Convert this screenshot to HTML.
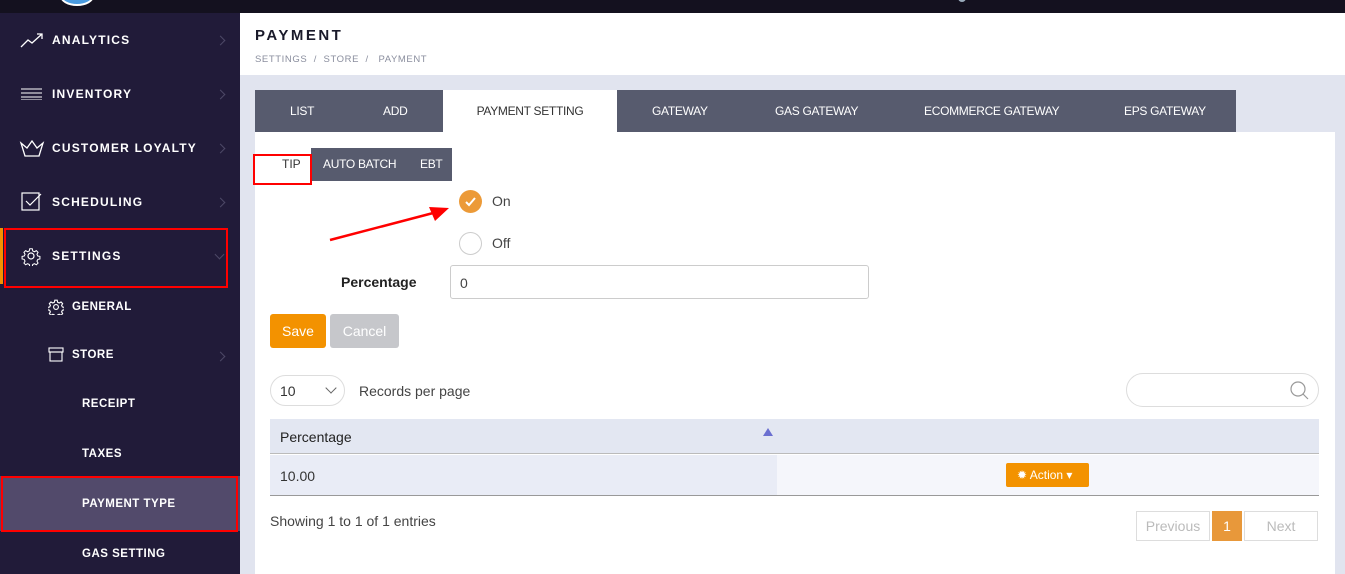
<!DOCTYPE html>
<html><head><meta charset="utf-8">
<style>
*{box-sizing:border-box;margin:0;padding:0}
body{width:1345px;height:574px;overflow:hidden;background:#e1e4ef;font-family:"Liberation Sans",sans-serif;position:relative}
.abs{position:absolute}
#top{left:0;top:0;width:1345px;height:13px;background:#14111f}
#side{left:0;top:13px;width:240px;height:561px;background:#211b39}
.mi{position:absolute;left:52px;color:#fff;font-size:12px;font-weight:bold;letter-spacing:1.2px}
.chev{position:absolute;left:217px;width:7px;height:7px;border-right:1px solid #4d4866;border-top:1px solid #4d4866;transform:rotate(45deg)}
.si{position:absolute;color:#fff;font-size:11.5px;font-weight:bold;letter-spacing:.5px}
.tab{position:absolute;top:90px;height:42px;line-height:42px;color:#fff;font-size:12px;letter-spacing:-.3px;text-align:center;background:#575b6e}
.t2{position:absolute;top:148px;height:33px;line-height:33px;color:#fff;font-size:12px;letter-spacing:-.3px;background:#575b6e}
</style></head><body>
<div id="top" class="abs"></div>
<div class="abs" style="left:60px;top:-14px;width:34px;height:20px;border-radius:50%;background:#4a9be0;border:2px solid #fff"></div>
<div class="abs" style="left:958px;top:-6px;width:8px;height:8px;border-radius:50%;background:#9ab"></div>
<div id="side" class="abs"></div>
<svg class="abs" style="left:20px;top:32px" width="24" height="16" viewBox="0 0 24 16"><path d="M1 15 L8 8 L12 11 L22 2 M17 2 H22 V7" fill="none" stroke="#fff" stroke-width="1.3"/></svg>
<div class="mi" style="top:33px">ANALYTICS</div><div class="chev" style="top:37px"></div>
<svg class="abs" style="left:20px;top:88px" width="24" height="12"><path d="M1 1H22M1 5H22M1 9H22M1 12H22" stroke="#fff" stroke-width="1"/></svg>
<div class="mi" style="top:87px">INVENTORY</div><div class="chev" style="top:91px"></div>
<svg class="abs" style="left:19px;top:139px" width="26" height="19"><path d="M2 4 L6 17 H20 L24 4 L18 9 L13 2 L8 9 Z" fill="none" stroke="#fff" stroke-width="1.3"/></svg>
<div class="mi" style="top:141px">CUSTOMER LOYALTY</div><div class="chev" style="top:145px"></div>
<svg class="abs" style="left:21px;top:192px" width="22" height="20"><rect x="1" y="1" width="17" height="17" fill="none" stroke="#fff" stroke-width="1.2"/><path d="M5 9 L9 13 L20 2" fill="none" stroke="#fff" stroke-width="1.2"/></svg>
<div class="mi" style="top:195px">SCHEDULING</div><div class="chev" style="top:199px"></div>
<div class="abs" style="left:0;top:228px;width:3px;height:56px;background:#f39200"></div>
<div class="abs" style="left:4px;top:228px;width:224px;height:60px;border:2px solid #f00"></div>
<svg class="abs" style="left:21px;top:246px" width="20" height="20" viewBox="0 0 20 20"><circle cx="10" cy="10" r="3" fill="none" stroke="#fff" stroke-width="1.2"/><path d="M8.5 1.5h3l.5 2.5 2 1 2.3-1.3 2 2-1.3 2.3 1 2 2.5.5v3l-2.5.5-1 2 1.3 2.3-2 2-2.3-1.3-2 1-.5 2.5h-3l-.5-2.5-2-1-2.3 1.3-2-2 1.3-2.3-1-2-2.5-.5v-3l2.5-.5 1-2-1.3-2.3 2-2 2.3 1.3 2-1z" transform="translate(10 10) scale(.85) translate(-10 -10)" fill="none" stroke="#fff" stroke-width="1.2"/></svg>
<div class="mi" style="top:249px">SETTINGS</div>
<div class="abs" style="left:216px;top:251px;width:7px;height:7px;border-right:1px solid #4d4866;border-bottom:1px solid #4d4866;transform:rotate(45deg)"></div>
<svg class="abs" style="left:48px;top:299px" width="16" height="16" viewBox="0 0 20 20"><circle cx="10" cy="10" r="3" fill="none" stroke="#fff" stroke-width="1.4"/><path d="M8.5 1.5h3l.5 2.5 2 1 2.3-1.3 2 2-1.3 2.3 1 2 2.5.5v3l-2.5.5-1 2 1.3 2.3-2 2-2.3-1.3-2 1-.5 2.5h-3l-.5-2.5-2-1-2.3 1.3-2-2 1.3-2.3-1-2-2.5-.5v-3l2.5-.5 1-2-1.3-2.3 2-2 2.3 1.3 2-1z" fill="none" stroke="#fff" stroke-width="1.4"/></svg>
<div class="si" style="left:72px;top:301px">GENERAL</div>
<svg class="abs" style="left:48px;top:347px" width="16" height="15"><rect x="1" y="1" width="14" height="4" fill="none" stroke="#fff" stroke-width="1.1"/><rect x="2" y="5" width="12" height="9" fill="none" stroke="#fff" stroke-width="1.1"/></svg>
<div class="si" style="left:72px;top:349px">STORE</div><div class="chev" style="top:353px"></div>
<div class="si" style="left:82px;top:398px">RECEIPT</div>
<div class="si" style="left:82px;top:448px">TAXES</div>
<div class="abs" style="left:0;top:476px;width:240px;height:55px;background:#524a6b"></div>
<div class="abs" style="left:1px;top:476px;width:237px;height:56px;border:2px solid #f00"></div>
<div class="si" style="left:82px;top:498px">PAYMENT TYPE</div>
<div class="si" style="left:82px;top:548px">GAS SETTING</div>
<div class="abs" style="left:240px;top:13px;width:1105px;height:62px;background:#fff"></div>
<div class="abs" style="left:255px;top:27px;font-size:15px;font-weight:bold;letter-spacing:2.5px;color:#1a1a2a">PAYMENT</div>
<div class="abs" style="left:255px;top:54px;font-size:9.5px;letter-spacing:.6px;color:#8a8e9e">SETTINGS &nbsp;/ &nbsp;STORE &nbsp;/ &nbsp;&nbsp;PAYMENT</div>
<div class="abs" style="left:255px;top:132px;width:1080px;height:442px;background:#fff"></div>
<div class="tab" style="left:255px;width:188px"><span style="position:absolute;left:35px">LIST</span><span style="position:absolute;left:128px">ADD</span></div>
<div class="abs" style="left:443px;top:90px;width:174px;height:42px;line-height:42px;background:#fff;text-align:center;font-size:12px;letter-spacing:-.3px;color:#333">PAYMENT SETTING</div>
<div class="tab" style="left:617px;width:619px"><span style="position:absolute;left:35px">GATEWAY</span><span style="position:absolute;left:158px">GAS GATEWAY</span><span style="position:absolute;left:307px">ECOMMERCE GATEWAY</span><span style="position:absolute;left:507px">EPS GATEWAY</span></div>
<div class="t2" style="left:311px;width:141px"><span style="position:absolute;left:12px">AUTO BATCH</span><span style="position:absolute;left:109px">EBT</span></div>
<div class="abs" style="left:253px;top:154px;width:59px;height:31px;border:2px solid #f00"></div>
<div class="abs" style="left:282px;top:157px;font-size:12px;color:#333">TIP</div>
<div class="abs" style="left:459px;top:190px;width:23px;height:23px;border-radius:50%;background:#ec9a38"></div>
<svg class="abs" style="left:459px;top:190px" width="23" height="23"><path d="M7 12 L10 15 L16 8" fill="none" stroke="#fff" stroke-width="2"/></svg>
<div class="abs" style="left:492px;top:193px;font-size:14px;color:#444">On</div>
<div class="abs" style="left:459px;top:232px;width:23px;height:23px;border-radius:50%;border:1px solid #ccc"></div>
<div class="abs" style="left:492px;top:235px;font-size:14px;color:#444">Off</div>
<svg class="abs" style="left:325px;top:200px" width="130" height="45"><path d="M5 40 L112 12" stroke="#f00" stroke-width="2.5"/><path d="M124 8 L104 7 L110 21 Z" fill="#f00"/></svg>
<div class="abs" style="left:341px;top:274px;font-size:14px;font-weight:bold;color:#222">Percentage</div>
<div class="abs" style="left:450px;top:265px;width:419px;height:34px;border:1px solid #ccc;border-radius:3px;font-size:14px;color:#444;padding:9px 0 0 9px">0</div>
<div class="abs" style="left:270px;top:314px;width:56px;height:34px;background:#f39200;border-radius:3px;color:#fff;font-size:14px;text-align:center;line-height:34px">Save</div>
<div class="abs" style="left:330px;top:314px;width:69px;height:34px;background:#c6c7cb;border-radius:3px;color:#fff;font-size:14px;text-align:center;line-height:34px">Cancel</div>
<div class="abs" style="left:270px;top:375px;width:75px;height:31px;border:1px solid #ddd;border-radius:16px;font-size:14px;color:#333;padding:7px 0 0 9px">10</div>
<div class="abs" style="left:327px;top:384px;width:8px;height:8px;border-right:1px solid #666;border-bottom:1px solid #666;transform:rotate(45deg)"></div>
<div class="abs" style="left:359px;top:383px;font-size:14px;color:#444">Records per page</div>
<div class="abs" style="left:1126px;top:373px;width:193px;height:34px;border:1px solid #ddd;border-radius:17px"></div>
<svg class="abs" style="left:1289px;top:380px" width="22" height="22"><circle cx="9" cy="9" r="7" fill="none" stroke="#999" stroke-width="1.2"/><path d="M14 14 L19 19" stroke="#999" stroke-width="1.2"/></svg>
<div class="abs" style="left:270px;top:419px;width:1049px;height:35px;background:#e3e7f2;border-bottom:1px solid #bbb"></div>
<div class="abs" style="left:280px;top:429px;font-size:14px;color:#222">Percentage</div>
<svg class="abs" style="left:763px;top:428px" width="10" height="8"><path d="M0 8 L5 0 L10 8Z" fill="#6b6fd0"/></svg>
<div class="abs" style="left:270px;top:455px;width:507px;height:40px;background:#e9ecf6"></div>
<div class="abs" style="left:777px;top:455px;width:542px;height:40px;background:#f5f6fb"></div>
<div class="abs" style="left:270px;top:495px;width:1049px;height:1px;background:#999"></div>
<div class="abs" style="left:280px;top:468px;font-size:14px;color:#333">10.00</div>
<div class="abs" style="left:1006px;top:463px;width:83px;height:24px;background:#f39200;border-radius:2px;color:#fff;font-size:12px;line-height:24px;padding-left:11px">✹ Action ▾</div>
<div class="abs" style="left:270px;top:513px;font-size:14px;color:#444">Showing 1 to 1 of 1 entries</div>
<div class="abs" style="left:1136px;top:511px;width:74px;height:30px;border:1px solid #ddd;color:#bbb;font-size:14px;text-align:center;line-height:28px">Previous</div>
<div class="abs" style="left:1212px;top:511px;width:30px;height:30px;background:#e8983a;color:#fff;font-size:14px;text-align:center;line-height:30px">1</div>
<div class="abs" style="left:1244px;top:511px;width:74px;height:30px;border:1px solid #ddd;color:#bbb;font-size:14px;text-align:center;line-height:28px">Next</div>
</body></html>
